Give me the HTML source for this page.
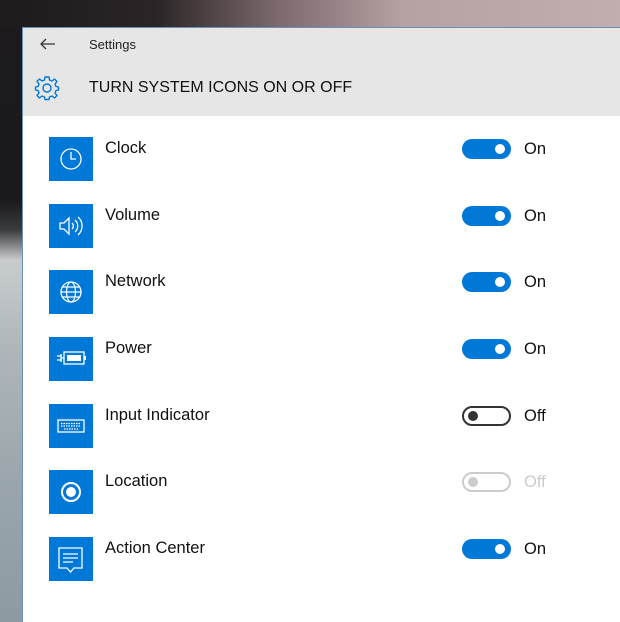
<!DOCTYPE html>
<html><head><meta charset="utf-8"><style>
*{margin:0;padding:0;box-sizing:border-box}
body{width:620px;height:622px;overflow:hidden;position:relative;font-family:"Liberation Sans",sans-serif;
background:linear-gradient(180deg,#1c1a1c 0px,#1a191b 200px,#3a3c3e 230px,#c8ccce 260px,#aeb6ba 350px,#9aa6ac 480px,#8e9aa2 622px);}
.topbg{position:absolute;left:0;top:0;width:620px;height:27px;background:linear-gradient(90deg,#1e1b1d 0%,#2a2426 25%,#7d6a6c 45%,#b6a1a3 65%,#c2adaf 100%)}
.win{position:absolute;left:22px;top:27px;width:598px;height:595px;background:#fff;border-left:1px solid #6a8fb0;border-top:1px solid #6a8fb0}
.hdr{position:absolute;left:0;top:0;width:598px;height:88px;background:#e6e6e6}
.set{position:absolute;left:66px;top:9px;font-size:13px;color:#222}
.title{position:absolute;left:66px;top:51px;font-size:16px;color:#111}
.row{position:absolute;left:26px;width:560px;height:44px}
.tile{position:absolute;left:0;top:0;width:44px;height:44px;background:#0078d7}
.tile svg{position:absolute;left:0;top:0}
.lbl{position:absolute;left:56px;top:2px;font-size:16.5px;color:#111}
.tg{position:absolute;left:413px;top:2px;width:49px;height:20px;border-radius:10px;background:#0078d7}
.tg i{position:absolute;left:33px;top:5px;width:10px;height:10px;border-radius:5px;background:#fff}
.tg.off{background:#fff;border:2px solid #333}
.tg.off i{left:4px;top:3px;background:#333}
.tg.dis{background:#fff;border:2px solid #ccc}
.tg.dis i{left:4px;top:3px;background:#ccc}
.st{position:absolute;left:475px;top:3px;font-size:16.5px;color:#111}
.st.d{color:#ccc}
</style></head><body>
<div class="topbg"></div>
<div class="win">
<div class="hdr">
<svg style="position:absolute;left:16px;top:9px" width="18" height="14" viewBox="0 0 18 14"><path d="M16 7H2M7 2L2 7l5 5" fill="none" stroke="#333" stroke-width="1.3"/></svg>
<div class="set">Settings</div>
<svg style="position:absolute;left:11px;top:47px" width="26" height="26" viewBox="-13 -13 26 26"><path d="M-2,-11 L2,-11 L2.5,-8 L5,-7 L7.5,-9 L10,-6.5 L8,-4 L9,-1.5 L11.5,-1 L11.5,2 L9,2.5 L8,5 L10,7.5 L7.5,10 L5,8 L2.5,9 L2,11.5 L-2,11.5 L-2.5,9 L-5,8 L-7.5,10 L-10,7.5 L-8,5 L-9,2.5 L-11.5,2 L-11.5,-1 L-9,-1.5 L-8,-4 L-10,-6.5 L-7.5,-9 L-5,-7 L-2.5,-8 Z" fill="none" stroke="#0078d7" stroke-width="1.4" stroke-linejoin="round"/><circle r="4" fill="none" stroke="#0078d7" stroke-width="1.4"/></svg>
<div class="title">TURN SYSTEM ICONS ON OR OFF</div>
</div>

<div class="row" style="top:109px"><div class="tile"><svg width="44" height="44"><circle cx="22" cy="22" r="10" fill="none" stroke="#fff" stroke-width="1.3"/><path d="M22 15v7h5" fill="none" stroke="#fff" stroke-width="1.3"/></svg></div><div class="lbl">Clock</div><div class="tg"><i></i></div><div class="st">On</div></div>

<div class="row" style="top:176px"><div class="tile"><svg width="44" height="44"><path d="M11 19h4l5-5v16l-5-5h-4z" fill="none" stroke="#fff" stroke-width="1.3"/><path d="M23 19a4 4 0 0 1 0 6M26 16a8 8 0 0 1 0 12M29 13a12 12 0 0 1 0 18" fill="none" stroke="#fff" stroke-width="1.3"/></svg></div><div class="lbl">Volume</div><div class="tg"><i></i></div><div class="st">On</div></div>

<div class="row" style="top:242px"><div class="tile"><svg width="44" height="44"><circle cx="22" cy="22" r="10" fill="none" stroke="#fff" stroke-width="1.3"/><ellipse cx="22" cy="22" rx="4.5" ry="10" fill="none" stroke="#fff" stroke-width="1.2"/><path d="M12 22h20M13.5 17h17M13.5 27h17" stroke="#fff" stroke-width="1.2"/></svg></div><div class="lbl">Network</div><div class="tg"><i></i></div><div class="st">On</div></div>

<div class="row" style="top:309px"><div class="tile"><svg width="44" height="44"><rect x="15" y="15" width="20" height="12" fill="none" stroke="#fff" stroke-width="1.3"/><rect x="35" y="19" width="2" height="4" fill="#fff"/><rect x="18" y="18" width="14" height="6" fill="#fff"/><path d="M8 19h5M8 23h5M12 17v8M12 21h3" stroke="#fff" stroke-width="1.3" fill="none"/></svg></div><div class="lbl">Power</div><div class="tg"><i></i></div><div class="st">On</div></div>

<div class="row" style="top:376px"><div class="tile"><svg width="44" height="44"><rect x="9" y="16" width="26" height="12" fill="none" stroke="#fff" stroke-width="1.3"/><path d="M12 19.5h20M12 22h20M15 25h14" stroke="#fff" stroke-width="1.2" stroke-dasharray="1.5 1"/></svg></div><div class="lbl">Input Indicator</div><div class="tg off"><i></i></div><div class="st">Off</div></div>

<div class="row" style="top:442px"><div class="tile"><svg width="44" height="44"><circle cx="22" cy="22" r="9" fill="none" stroke="#fff" stroke-width="2"/><circle cx="22" cy="22" r="5" fill="#fff"/></svg></div><div class="lbl">Location</div><div class="tg dis"><i></i></div><div class="st d">Off</div></div>

<div class="row" style="top:509px"><div class="tile"><svg width="44" height="44"><path d="M10 11h23v20h-8l-3.5 4-3.5-4h-8z" fill="none" stroke="#fff" stroke-width="1.3"/><path d="M14 17h15M14 21h15M14 25h10" stroke="#fff" stroke-width="1.3"/></svg></div><div class="lbl">Action Center</div><div class="tg"><i></i></div><div class="st">On</div></div>
</div>
</body></html>
